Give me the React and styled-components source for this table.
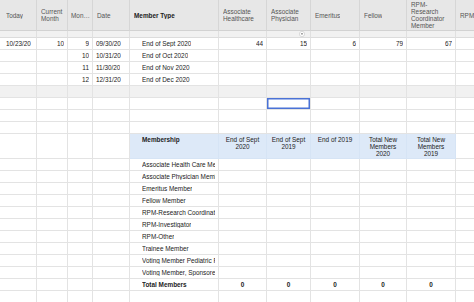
import React from "react";
import styled, { createGlobalStyle } from "styled-components";

const COLUMNS = "37px 31px 25px 37px 89px 48px 44px 49px 47px 49px 60px";

const GlobalStyle = createGlobalStyle`
  body {
    margin: 0;
    overflow: hidden;
    background: #ffffff;
    font-family: "Liberation Sans", Arial, sans-serif;
    font-size: 6.4px;
    color: #222222;
  }
`;

const Sheet = styled.div`
  width: 516px;
`;

const Row = styled.div`
  display: grid;
  grid-template-columns: ${COLUMNS};
  height: ${(p) => p.$h || 12}px;
  background: ${(p) => p.$bg || "#ffffff"};
`;

const JUSTIFY = { left: "flex-start", right: "flex-end", center: "center" };

const Cell = styled.div`
  box-sizing: border-box;
  display: flex;
  align-items: center;
  justify-content: ${(p) => JUSTIFY[p.$align || "left"]};
  padding: 0 3px 0 ${(p) => (p.$indent != null ? p.$indent : 3)}px;
  border-right: 1px solid ${(p) => p.$line || "#e3e3e3"};
  border-bottom: 1px solid #e3e3e3;
  background: ${(p) => p.$bg || "transparent"};
  font-weight: ${(p) => (p.$bold ? 700 : 400)};
  white-space: nowrap;
  overflow: hidden;
  box-shadow: ${(p) => (p.$selected ? "inset 0 0 0 1.5px #4a72d6" : "none")};
`;

const Text = styled.span`
  min-width: 0;
  overflow: hidden;
  text-overflow: ${(p) => (p.$ellipsis ? "ellipsis" : "clip")};
`;

const HeadCell = styled(Cell)`
  padding: 0 ${(p) => (p.$padRight != null ? p.$padRight : 4)}px 0 ${(p) => (p.$indent != null ? p.$indent : 4)}px;
  border-right-color: #d6d6d6;
  border-bottom-color: #d2d2d2;
  color: ${(p) => (p.$bold ? "#222222" : "#555555")};
  white-space: ${(p) => (p.$nowrap ? "nowrap" : "normal")};
  line-height: 7px;
`;

const FilterCell = styled(Cell)`
  padding-right: 5px;
  border-right-color: #e0e0e0;
  border-bottom-color: #dcdcdc;
`;

const BlueCell = styled(Cell)`
  align-items: flex-start;
  padding-top: 2px;
  background: #dde9f8;
  border-right-color: #d6e4f5;
  border-bottom-color: #d6e4f5;
  line-height: 7px;
  white-space: normal;
  text-align: center;
`;

const DropDot = () => (
  <svg width="6" height="6" viewBox="0 0 6 6">
    <circle cx="3" cy="3" r="2.6" fill="#ffffff" stroke="#c4c4c4" strokeWidth="0.6" />
    <path d="M1.9 2.4 L4.1 2.4 L3 3.7 Z" fill="#333333" />
  </svg>
);

const headers = [
  { t: "Today", indent: 6 },
  { t: "Current Month" },
  { t: "Month Number", nowrap: true, ellipsis: true, indent: 3, padRight: 1 },
  { t: "Date" },
  { t: "Member Type", bold: true },
  { t: "Associate Healthcare" },
  { t: "Associate Physician" },
  { t: "Emeritus" },
  { t: "Fellow" },
  { t: "RPM-Research Coordinator Member" },
  { t: "RPM-Investigator", nowrap: true },
];

const ALIGN = ["left", "right", "right", "left", "left", "right", "right", "right", "right", "right", "right"];
const INDENT = [6, 3, 3, 3, 12, 3, 3, 3, 3, 3, 3];

const topRows = [
  ["10/23/20", "10", "9", "09/30/20", "End of Sept 2020", "44", "15", "6", "79", "67", ""],
  ["", "", "10", "10/31/20", "End of Oct 2020", "", "", "", "", "", ""],
  ["", "", "11", "11/30/20", "End of Nov 2020", "", "", "", "", "", ""],
  ["", "", "12", "12/31/20", "End of Dec 2020", "", "", "", "", "", ""],
];

const membershipHead = [
  "End of Sept 2020",
  "End of Sept 2019",
  "End of 2019",
  "Total New Members 2020",
  "Total New Members 2019",
];

const members = [
  "Associate Health Care Member",
  "Associate Physician Member",
  "Emeritus Member",
  "Fellow Member",
  "RPM-Research Coordinator Member",
  "RPM-Investigator",
  "RPM-Other",
  "Trainee Member",
  "Voting Member Pediatric Faculty",
  "Voting Member, Sponsored",
];

const blanks = (n) => Array.from({ length: n }, (_, i) => i);

const EmptyRow = ({ bg, selectedCol }) => (
  <Row $bg={bg}>
    {blanks(11).map((i) => (
      <Cell key={i} $selected={i === selectedCol} />
    ))}
  </Row>
);

const DataRow = ({ values }) => (
  <Row>
    {values.map((v, i) => (
      <Cell key={i} $align={ALIGN[i]} $indent={INDENT[i]}>
        <Text>{v}</Text>
      </Cell>
    ))}
  </Row>
);

const MemberRow = ({ name, total }) => (
  <Row>
    {blanks(4).map((i) => (
      <Cell key={i} />
    ))}
    <Cell $indent={12} $bold={total}>
      <Text>{name}</Text>
    </Cell>
    {blanks(5).map((i) => (
      <Cell key={i} $align="center" $bold>
        {total ? "0" : ""}
      </Cell>
    ))}
    <Cell />
  </Row>
);

export default function App() {
  return (
    <>
      <GlobalStyle />
      <Sheet>
        <Row $h={31} $bg="#e7e7e7">
          {headers.map((h, i) => (
            <HeadCell key={i} $bold={h.bold} $nowrap={h.nowrap} $indent={h.indent} $padRight={h.padRight}>
              <Text $ellipsis={h.ellipsis}>{h.t}</Text>
            </HeadCell>
          ))}
        </Row>
        <Row $h={7} $bg="#f1f1f1">
          {blanks(11).map((i) => (
            <FilterCell key={i} $align="right">
              {i === 6 && <DropDot />}
            </FilterCell>
          ))}
        </Row>
        {topRows.map((r, i) => (
          <DataRow key={i} values={r} />
        ))}
        <EmptyRow bg="#f1f1f1" />
        <EmptyRow selectedCol={6} />
        <EmptyRow />
        <EmptyRow />
        <Row $h={25}>
          {blanks(4).map((i) => (
            <Cell key={i} />
          ))}
          <BlueCell $indent={12} $bold>
            Membership
          </BlueCell>
          {membershipHead.map((t) => (
            <BlueCell key={t} $align="center">
              {t}
            </BlueCell>
          ))}
          <Cell />
        </Row>
        {members.map((m) => (
          <MemberRow key={m} name={m} />
        ))}
        <MemberRow name="Total Members" total />
        <EmptyRow />
      </Sheet>
    </>
  );
}
